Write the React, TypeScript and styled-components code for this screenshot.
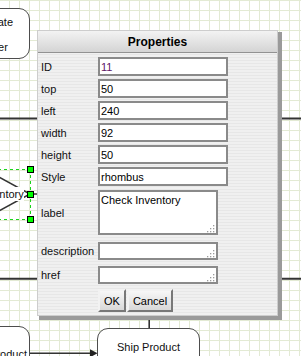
import React from 'react'
import styled, { createGlobalStyle } from 'styled-components'

//Types
type FieldProps = {
    label: string,
    value: string,
    gap: number,
    color?: string,
}

type AreaProps = {
    label: string,
    value: string,
    gap: number,
    height: number,
}

//Styles
const GlobalStyle = createGlobalStyle`
    html, body {
        margin: 0;
        padding: 0;
        background: #fff;
    }
    body {
        font-family: "Liberation Sans", Arial, sans-serif;
    }
`;

const Canvas = styled.div`
    position: relative;
    width: 301px;
    height: 356px;
    overflow: hidden;
    background-color: #fff;
    background-image:
        linear-gradient(to right, #e3ead4 1px, transparent 1px),
        linear-gradient(to bottom, #e3ead4 1px, transparent 1px);
    background-size: 10px 10px;
    background-position: 9px 0;
`;

const Edges = styled.svg`
    position: absolute;
    left: 0;
    top: 0;
    overflow: visible;
`;

const Node = styled.div<{ $x: number, $y: number, $w: number, $h: number, $align?: string, $top?: number, $bottom?: number }>`
    position: absolute;
    left: ${p => p.$x}px;
    top: ${p => p.$y}px;
    width: ${p => p.$w}px;
    height: ${p => p.$h}px;
    box-sizing: border-box;
    border: 1.5px solid #4d4d4d;
    border-radius: 11px;
    background: #fff;
    display: flex;
    flex-direction: column;
    justify-content: center;
    align-items: ${p => p.$align ?? 'center'};
    padding: ${p => p.$top ?? 3}px 2px ${p => p.$bottom ?? 0}px 2px;
    font-size: 11px;
    line-height: 12.5px;
    color: #111;
    white-space: nowrap;
`;

const DiamondLabel = styled.div`
    position: absolute;
    left: -62px;
    top: 187px;
    width: 92px;
    display: flex;
    justify-content: center;
    font-size: 11px;
    line-height: 14px;
    color: #111;
    white-space: nowrap;

    span {
        background: #fff;
    }
`;

const Dialog = styled.div`
    position: absolute;
    left: 37px;
    top: 30px;
    width: 241px;
    box-sizing: border-box;
    border: 1px solid #cdcdcd;
    box-shadow: 3px 3px 0 1px #9a9a9a;
    background: repeating-linear-gradient(to bottom, #f0f0f0 0 2px, #e7e7e7 2px 3px);
    z-index: 2;
`;

const DialogHeader = styled.div`
    height: 21px;
    border-bottom: 1px solid #929292;
    background: linear-gradient(to bottom, #f3f3f3, #d4d4d4);
    display: flex;
    align-items: center;
    justify-content: center;
    font-size: 12px;
    font-weight: bold;
    color: #000;
`;

const DialogBody = styled.div`
    display: flex;
    flex-direction: column;
    padding: 4px 3px 3px 3px;
`;

const Row = styled.div<{ $gap: number }>`
    display: flex;
    align-items: center;
    margin-top: ${p => p.$gap}px;
`;

const Label = styled.label`
    width: 57px;
    flex-shrink: 0;
    font-size: 11px;
    color: #111;
`;

const TextInput = styled.input<{ $color?: string }>`
    box-sizing: border-box;
    width: 130px;
    height: 19px;
    margin: 0;
    padding: 0 1px;
    border: 2px solid #8a8a8a;
    background: #fff;
    font-family: "Liberation Sans", Arial, sans-serif;
    font-size: 11px;
    color: ${p => p.$color ?? '#000'};
    outline: none;
`;

const AreaWrap = styled.div`
    position: relative;
    display: flex;
`;

const TextArea = styled.textarea<{ $height: number }>`
    box-sizing: border-box;
    width: 120px;
    height: ${p => p.$height}px;
    margin: 0;
    padding: 2px 1px;
    border: 2px solid #8a8a8a;
    background: #fff;
    resize: none;
    overflow: hidden;
    font-family: "Liberation Sans", Arial, sans-serif;
    font-size: 11px;
    line-height: 13px;
    color: #000;
    outline: none;
`;

const Grip = styled.svg`
    position: absolute;
    right: 3px;
    bottom: 2px;
`;

const Buttons = styled.div`
    display: flex;
    gap: 1px;
    margin-top: 5px;
    padding-left: 57px;
`;

const Button = styled.button`
    height: 23px;
    margin: 0;
    padding: 0 4px;
    border: 2px solid;
    border-color: #f2f2f2 #787878 #787878 #f2f2f2;
    background: linear-gradient(to bottom, #f7f7f7, #d8d8d8);
    font-family: "Liberation Sans", Arial, sans-serif;
    font-size: 11px;
    color: #000;
`;

const ResizeGrip = () => (
    <Grip width="8" height="8" viewBox="0 0 8 8">
        <g fill="#9c9c9c">
            <rect x="6" y="0" width="1.3" height="1.3" />
            <rect x="3" y="3" width="1.3" height="1.3" />
            <rect x="6" y="3" width="1.3" height="1.3" />
            <rect x="0" y="6" width="1.3" height="1.3" />
            <rect x="3" y="6" width="1.3" height="1.3" />
            <rect x="6" y="6" width="1.3" height="1.3" />
        </g>
    </Grip>
)

const Field = (props: FieldProps) => (
    <Row $gap={props.gap}>
        <Label>{props.label}</Label>
        <TextInput defaultValue={props.value} $color={props.color} />
    </Row>
)

const AreaField = (props: AreaProps) => (
    <Row $gap={props.gap}>
        <Label>{props.label}</Label>
        <AreaWrap>
            <TextArea $height={props.height} defaultValue={props.value} />
            <ResizeGrip />
        </AreaWrap>
    </Row>
)

const Diagram = () => (
    <Edges width="301" height="356">
        <g stroke="#333" strokeWidth="2" fill="none">
            <line x1="0" y1="118.5" x2="301" y2="118.5" />
            <line x1="0" y1="278.7" x2="301" y2="278.7" />
        </g>
        <g stroke="#333" strokeWidth="1.6" fill="none">
            <line x1="30" y1="194" x2="260" y2="194" />
            <line x1="149.2" y1="290" x2="149.2" y2="328" />
            <line x1="30" y1="353.3" x2="91" y2="353.3" />
        </g>
        <polygon points="90,349.3 97.5,353.3 90,357.3" fill="#222" />
        <polygon points="-16,169 30,194 -16,219 -62,194" fill="#fff" stroke="#333" strokeWidth="1.5" />
        <g stroke="#1bd41b" strokeWidth="1" strokeDasharray="3 3" fill="none">
            <line x1="-62" y1="169.5" x2="30" y2="169.5" />
            <line x1="-62" y1="219.5" x2="30" y2="219.5" />
            <line x1="30.5" y1="169" x2="30.5" y2="219" />
        </g>
        <g fill="#00ff00" stroke="#000" strokeWidth="1">
            <rect x="27.5" y="166.5" width="6" height="6" />
            <rect x="27.5" y="191.5" width="6" height="6" />
            <rect x="27.5" y="216.5" width="6" height="6" />
        </g>
    </Edges>
)

const App = () => {
    return (
        <Canvas>
            <GlobalStyle />
            <Diagram />
            <Node $x={-62} $y={8} $w={92} $h={51}>
                <div>Consolidate</div>
                <div>Order</div>
                <div>Customer</div>
            </Node>
            <DiamondLabel>
                <span>Check Inventory</span>
            </DiamondLabel>
            <Node $x={-74} $y={326} $w={104} $h={54} $align="flex-end">
                <div>Receive Product</div>
            </Node>
            <Node $x={97} $y={328} $w={103} $h={50} $top={0} $bottom={12}>
                <div>Ship Product</div>
            </Node>
            <Dialog>
                <DialogHeader>Properties</DialogHeader>
                <DialogBody>
                    <Field label="ID" value="11" gap={0} color="#5e1666" />
                    <Field label="top" value="50" gap={3} />
                    <Field label="left" value="240" gap={3} />
                    <Field label="width" value="92" gap={3} />
                    <Field label="height" value="50" gap={3} />
                    <Field label="Style" value="rhombus" gap={3} />
                    <AreaField label="label" value="Check Inventory" gap={4} height={45} />
                    <AreaField label="description" value="" gap={7} height={18} />
                    <AreaField label="href" value="" gap={6} height={18} />
                    <Buttons>
                        <Button>OK</Button>
                        <Button>Cancel</Button>
                    </Buttons>
                </DialogBody>
            </Dialog>
        </Canvas>
    )
}

export default App;
